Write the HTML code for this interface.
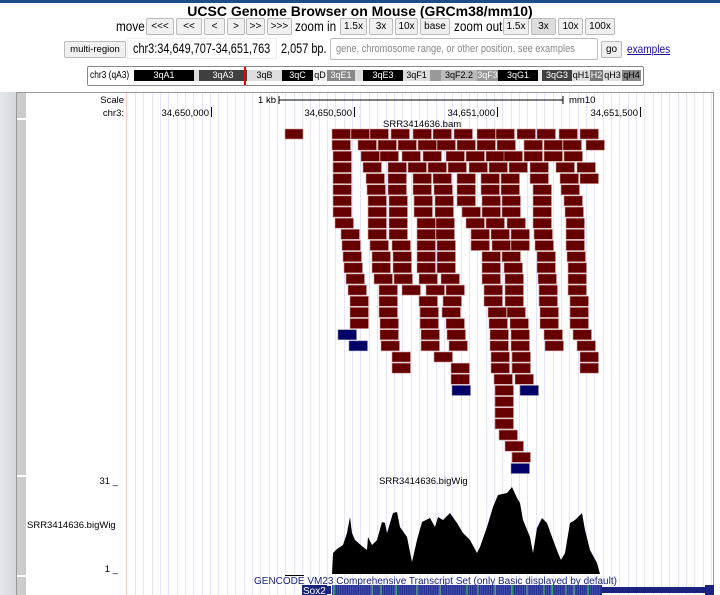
<!DOCTYPE html>
<html><head><meta charset="utf-8">
<style>
body{margin:0;width:720px;height:595px;overflow:hidden;background:#fff;font-family:"Liberation Sans",sans-serif;position:relative}
.a{position:absolute;white-space:nowrap}
.n{transform:scaleX(0.84);transform-origin:0 0}
.m{transform:scaleX(0.78);transform-origin:0 0}
.b{position:absolute;top:18px;border:1px solid #bbb;background:#f0f0f0;font-size:10px;line-height:15px;text-align:center;border-radius:2px;box-sizing:border-box;height:17px;overflow:hidden}
.band{position:absolute;top:70px;height:11px;font-size:9px;line-height:11px;text-align:center;color:#fff;overflow:hidden}
</style></head><body>
<div class="a" style="left:0;top:0;width:720px;height:3px;background:#1c4d86"></div>
<div class="a" style="left:0;top:3px;width:720px;text-align:center;font-weight:bold;font-size:14px">UCSC Genome Browser on Mouse (GRCm38/mm10)</div>
<div class="a n" style="left:116px;top:18px;font-size:14px">move</div>
<div class="b" style="left:146px;width:28px">&lt;&lt;&lt;</div>
<div class="b" style="left:176px;width:26px">&lt;&lt;</div>
<div class="b" style="left:204px;width:21px">&lt;</div>
<div class="b" style="left:227px;width:18px">&gt;</div>
<div class="b" style="left:246px;width:19px">&gt;&gt;</div>
<div class="b" style="left:267px;width:25px">&gt;&gt;&gt;</div>
<div class="a n" style="left:295px;top:18px;font-size:14px">zoom in</div>
<div class="b" style="left:340px;width:27px">1.5x</div>
<div class="b" style="left:369px;width:24px">3x</div>
<div class="b" style="left:395px;width:23px">10x</div>
<div class="b" style="left:420px;width:30px">base</div>
<div class="a n" style="left:454px;top:18px;font-size:14px">zoom out</div>
<div class="b" style="left:503px;width:26px">1.5x</div>
<div class="b" style="left:531px;width:25px;background:#ddd">3x</div>
<div class="b" style="left:558px;width:25px">10x</div>
<div class="b" style="left:585px;width:30px">100x</div>
<div class="b" style="left:64px;top:41px;width:62px;font-size:9.5px">multi-region</div>
<div class="a" style="left:127px;top:38px;width:150px;height:21px;border:1px solid #eee;box-sizing:border-box"></div>
<div class="a m" style="left:133px;top:40px;font-size:14px">chr3:34,649,707-34,651,763</div>
<div class="a m" style="left:281px;top:40px;font-size:14px">2,057 bp.</div>
<div class="a" style="left:330px;top:38px;width:268px;height:22px;border:1px solid #bbb;box-sizing:border-box;border-radius:2px"></div>
<div class="a n" style="left:336px;top:43px;font-size:11px;color:#888">gene, chromosome range, or other position, see examples</div>
<div class="b" style="left:601px;top:41px;width:21px">go</div>
<div class="a n" style="left:627px;top:42px;font-size:12px;color:#1a0dab;text-decoration:underline">examples</div>
<div class="a" style="left:87px;top:66px;width:557px;height:20px;border:1px solid #888;box-sizing:border-box;border-radius:2px"></div>
<div class="a n" style="left:90px;top:70px;font-size:10px">chr3 (qA3)</div>
<div class="band" style="left:134px;width:60px;background:#000">3qA1</div>
<div class="band" style="left:194px;width:5px;background:#ddd"></div>
<div class="band" style="left:199px;width:48px;background:#404040">3qA3</div>
<div class="band" style="left:247px;width:35px;background:#ddd;color:#000">3qB</div>
<div class="band" style="left:282px;width:31px;background:#000">3qC</div>
<div class="band" style="left:313px;width:14px;background:#eee;color:#000">qD</div>
<div class="band" style="left:327px;width:28px;background:#888">3qE1</div>
<div class="band" style="left:355px;width:8px;background:#ddd"></div>
<div class="band" style="left:363px;width:40px;background:#000">3qE3</div>
<div class="band" style="left:403px;width:27px;background:#ddd;color:#000">3qF1</div>
<div class="band" style="left:430px;width:11px;background:#999"></div>
<div class="band" style="left:441px;width:36px;background:#bbb;color:#000">3qF2.2</div>
<div class="band" style="left:477px;width:21px;background:#999">3qF3</div>
<div class="band" style="left:498px;width:40px;background:#000">3qG1</div>
<div class="band" style="left:538px;width:4px;background:#eee"></div>
<div class="band" style="left:542px;width:30px;background:#404040">3qG3</div>
<div class="band" style="left:572px;width:18px;background:#ddd;color:#000">qH1</div>
<div class="band" style="left:590px;width:13px;background:#777">H2</div>
<div class="band" style="left:603px;width:19px;background:#ddd;color:#000">qH3</div>
<div class="band" style="left:622px;width:19px;background:#888;color:#000">qH4</div>
<div class="a" style="left:244px;top:67px;width:2px;height:18px;background:#e00"></div>
<div class="a" style="left:0;top:92px;width:16px;height:503px;background:linear-gradient(90deg,#e4e8ec,#d4d8dc)"></div>
<svg class="a" style="left:0;top:0" width="720" height="595">
<rect x="16.5" y="92.5" width="697" height="510" fill="none" stroke="#999"/>
<rect x="17" y="93" width="9" height="25" fill="#ccc"/>
<rect x="17" y="120" width="9" height="355" fill="#ccc"/>
<rect x="17" y="477" width="9" height="98" fill="#ccc"/>
<rect x="17" y="577" width="9" height="20" fill="#ccc"/>
<line x1="126.5" y1="93" x2="126.5" y2="595" stroke="#fcc"/>
<g id="grid" stroke="#e4e4ff"></g>
<g font-size="9.5" fill="#000" font-family="Liberation Sans">
<text x="124" y="103" text-anchor="end">Scale</text>
<text x="124" y="116" text-anchor="end">chr3:</text>
<text x="276" y="103" text-anchor="end">1 kb</text>
<line x1="279" y1="96" x2="279" y2="104" stroke="#000"/><line x1="279" y1="100" x2="563" y2="100" stroke="#000"/><line x1="563" y1="96" x2="563" y2="104" stroke="#000"/>
<text x="569" y="103">mm10</text>
<text x="209" y="116" text-anchor="end">34,650,000</text><line x1="211.5" y1="107" x2="211.5" y2="117" stroke="#000"/>
<text x="352" y="116" text-anchor="end">34,650,500</text><line x1="354.5" y1="107" x2="354.5" y2="117" stroke="#000"/>
<text x="495" y="116" text-anchor="end">34,651,000</text><line x1="497.5" y1="107" x2="497.5" y2="117" stroke="#000"/>
<text x="638" y="116" text-anchor="end">34,651,500</text><line x1="640.5" y1="107" x2="640.5" y2="117" stroke="#000"/>
<text x="383" y="127">SRR3414636.bam</text>
<text x="379" y="484">SRR3414636.bigWig</text>
<text x="118" y="484" text-anchor="end">31 _</text>
<text x="118" y="572" text-anchor="end">1 _</text>
<text x="27" y="528">SRR3414636.bigWig</text>
</g>
<g id="reads" stroke="#c99" stroke-width="0.6"></g>
<polygon fill="#000" points="332,574 333,553 337,549 343,545 347,533 350,517 352,533 355,540 363,547 367,550 368,537 372,545 377,540 382,522 385,523 387,533 393,513 397,512 400,527 407,537 412,562 417,540 422,522 430,518 435,527 438,517 443,520 450,513 457,523 463,533 470,540 477,553 480,547 487,527 493,507 498,495 507,493 512,487 517,498 520,503 523,520 530,537 533,553 537,528 542,518 547,523 552,537 558,553 561,560 565,553 570,523 575,520 582,513 585,530 590,550 597,563 600,574"/>
<line x1="285" y1="575.5" x2="304" y2="575.5" stroke="#000"/>
<text x="254" y="584" font-size="10" fill="#1a237e" font-family="Liberation Sans">GENCODE VM23 Comprehensive Transcript Set (only Basic displayed by default)</text>
<rect x="302" y="585" width="25" height="10" fill="#1a237e"/>
<text x="303" y="594" font-size="10" fill="#fff" font-family="Liberation Sans">Sox2</text>
<rect x="327" y="586" width="4" height="8" fill="#1a237e"/>
<rect x="332" y="585" width="270" height="10" fill="#26318f"/>
<g id="gstripe"></g>
<rect x="602" y="587" width="104" height="6" fill="#1a237e"/>
<rect x="705" y="585" width="9" height="10" fill="#1a237e"/>
</svg>
<script>
var ns="http://www.w3.org/2000/svg";
function el(p,t,a){var e=document.createElementNS(ns,t);for(var k in a)e.setAttribute(k,a[k]);p.appendChild(e);}
var g=document.getElementById("grid");
for(var x=135;x<712;x+=8.35){el(g,"line",{x1:Math.round(x)+.5,y1:93,x2:Math.round(x)+.5,y2:595});}
var rows=[
[[285],[332,351,370,391,413,433,454,477,496,517,537,559,580]],
[[],[332,358,378,398,418,437,457,477,497,524,544,563,586]],
[[],[333,361,380,402,423,446,466,486,504,524,544,564]],
[[],[333,363,388,408,428,448,469,489,509,530,556,577]],
[[],[333,366,388,413,433,457,481,501,530,560,580]],
[[],[333,367,388,413,434,457,481,501,533,561]],
[[],[333,368,389,414,435,457,482,502,533,564]],
[[],[333,368,389,414,435,462,482,502,533,565]],
[[],[335,368,389,417,436,466,486,507,533,566]],
[[],[341,368,389,417,436,471,491,511,534,566]],
[[],[342,370,392,417,437,471,492,511,535,566]],
[[],[343,372,393,417,437,482,502,537,567]],
[[],[344,372,393,417,437,482,504,537,568]],
[[],[346,374,394,419,441,482,505,538,568]],
[[],[348,379,402,426,446,484,505,539,568]],
[[],[350,379,419,443,484,505,539,570]],
[[],[350,379,420,442,488,507,540,570]],
[[],[350,380,420,446,489,510,540,570]],
[[],[380,421,447,490,511,544,573],[338]],
[[],[381,421,449,490,511,545,577],[349]],
[[],[392,434,491,512,580]],
[[],[392,451,491,512,580]],
[[],[451,494,515]],
[[],[495],[452,520]],
[[],[495]],[[],[495]],[[],[495]],[[],[499]],[[],[505]],[[],[512]],[[],[],[511]]
];
var r=document.getElementById("reads");
rows.forEach(function(row,i){var y=129+i*11.15;
 if(i==0){el(r,"rect",{x:285,y:y,width:18,height:10,fill:"#660000"});}
 row[1].forEach(function(x){el(r,"rect",{x:x,y:y,width:18.5,height:10,fill:"#660000"});});
 (row[2]||[]).forEach(function(x){el(r,"rect",{x:x,y:y,width:18.5,height:10,fill:"#000066",stroke:"#88a"});});
});
var gs=document.getElementById("gstripe");
for(var x=333;x<600;x+=2.2){el(gs,"line",{x1:x,y1:585,x2:x,y2:595,stroke:"#4a56b8","stroke-width":0.8});}
[334,372,381,396,417,440,467,478,495,512,527,544,552,566,574,588].forEach(function(x,i){el(gs,"line",{x1:x,y1:585,x2:x,y2:595,stroke:i%3?"#6c6":"#3e3","stroke-width":1});});
</script>
</body></html>
